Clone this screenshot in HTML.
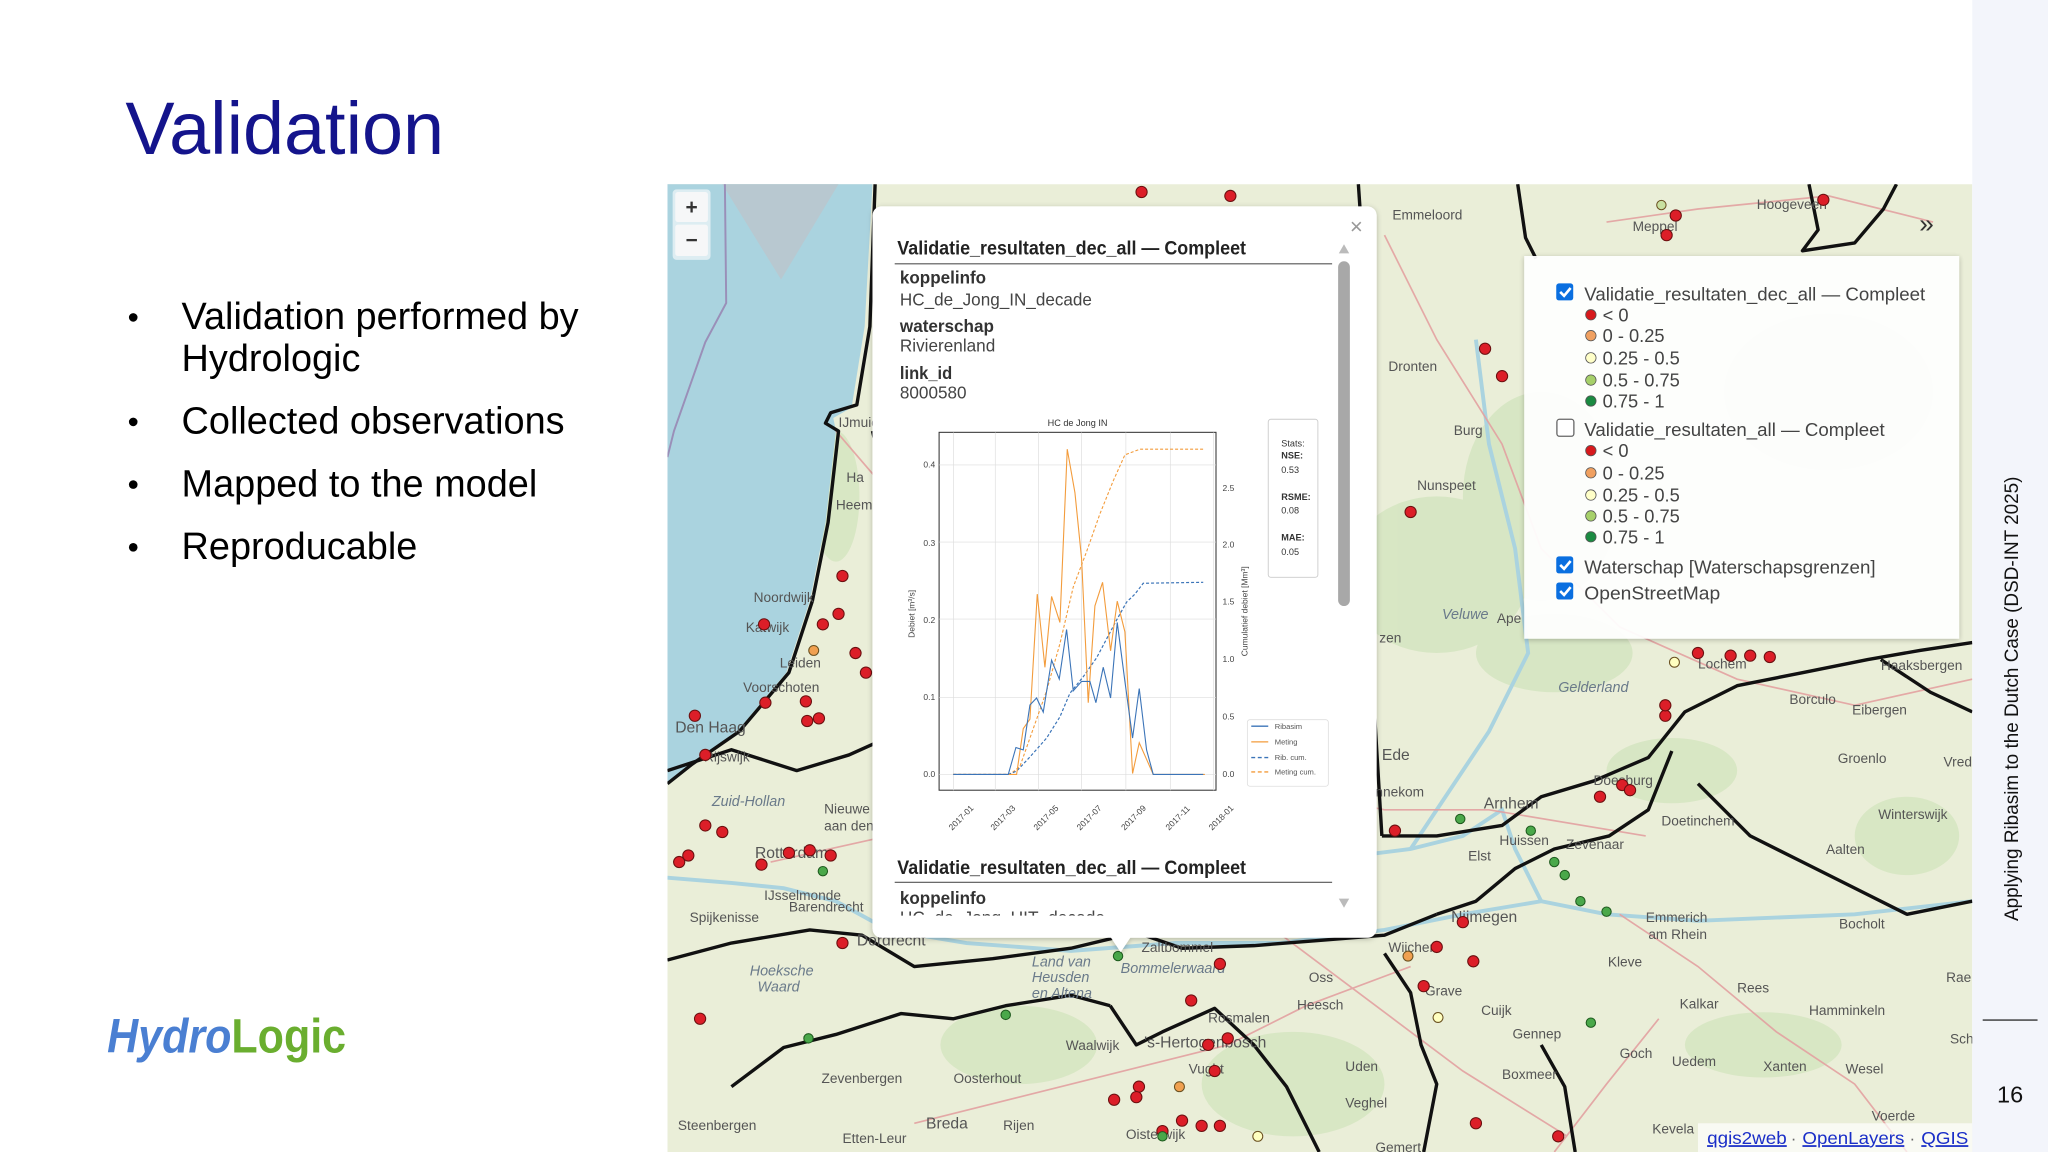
<!DOCTYPE html>
<html><head><meta charset="utf-8"><style>
html,body{margin:0;padding:0;background:#fff;}
svg{display:block;}
text{font-family:"Liberation Sans",Arial,sans-serif;}
</style></head><body>
<svg width="2048" height="1152" viewBox="0 0 1568 882" xmlns="http://www.w3.org/2000/svg">
<defs>
<clipPath id="mapclip"><rect x="511" y="141" width="999" height="741"/></clipPath>
<clipPath id="popclip"><rect x="680" y="180" width="340" height="521"/></clipPath>
<filter id="sh" x="-10%" y="-10%" width="120%" height="120%"><feDropShadow dx="0" dy="1" stdDeviation="2" flood-opacity="0.25"/></filter>
</defs>
<rect width="1568" height="882" fill="#fff"/>
<rect x="1510" y="0" width="58" height="882" fill="#f3f5fb"/>
<text transform="translate(1545,535) rotate(-90)" text-anchor="middle" font-size="14.5" fill="#111">Applying Ribasim to the Dutch Case (DSD-INT 2025)</text>
<line x1="1518" y1="781" x2="1560" y2="781" stroke="#333" stroke-width="1"/>
<text x="1539" y="844" text-anchor="middle" font-size="18" fill="#111">16</text>

<text x="96" y="118" font-size="57" fill="#14148c" textLength="244" lengthAdjust="spacingAndGlyphs">Validation</text>
<g font-size="29" fill="#000">
<circle cx="102" cy="243" r="3.3"/><text x="139" y="252">Validation performed by</text>
<text x="139" y="284">Hydrologic</text>
<circle cx="102" cy="323" r="3.3"/><text x="139" y="332">Collected observations</text>
<circle cx="102" cy="371" r="3.3"/><text x="139" y="380">Mapped to the model</text>
<circle cx="102" cy="419" r="3.3"/><text x="139" y="428">Reproducable</text>
</g>
<text x="82" y="806" font-size="37" font-weight="bold" textLength="183" lengthAdjust="spacingAndGlyphs"><tspan fill="#4a7fd2" font-style="italic">Hydro</tspan><tspan fill="#6aae2f">Logic</tspan></text>

<g clip-path="url(#mapclip)">
<rect x="511" y="141" width="999" height="741" fill="#eaeed8"/>
<g fill="#d6e6c2" opacity="0.9">
<ellipse cx="1100" cy="440" rx="70" ry="60"/><ellipse cx="1180" cy="380" rx="60" ry="80"/>
<ellipse cx="1400" cy="300" rx="80" ry="60"/><ellipse cx="1280" cy="590" rx="50" ry="25"/>
<ellipse cx="780" cy="800" rx="60" ry="30"/><ellipse cx="990" cy="830" rx="70" ry="40"/>
<ellipse cx="1350" cy="800" rx="60" ry="25"/><ellipse cx="1190" cy="500" rx="60" ry="30"/>
<ellipse cx="640" cy="380" rx="18" ry="50"/><ellipse cx="1460" cy="640" rx="40" ry="30"/>
</g>
<path d="M511,141 L668,141 L662,250 L652,312 L638,320 L640,330 L632,400 L620,460 L602,515 L566,558 L530,585 L511,600 Z" fill="#aad3df"/>
<path d="M553,141 L642,141 L598,214 Z" fill="#b8c8d0"/>
<path d="M555,141 L556,232 L540,262 L516,330 L511,350" fill="none" stroke="#9a8fb8" stroke-width="1.5"/>
<g fill="none" stroke="#aad3df" stroke-width="3">
<path d="M1510,690 L1420,700 L1300,705 L1230,700 L1180,690 L1120,700 L1060,712 L980,722 L900,722 L820,728 L740,722 L680,712 L640,690 L600,680 L560,676 L511,672"/>
<path d="M1180,690 L1160,650 L1150,620 L1120,640 L1080,650 L1000,660"/>
<path d="M1080,650 L1140,560 L1170,500 L1160,420 L1140,340 L1130,260"/>
</g>
<g fill="none" stroke="#e3a1a1" stroke-width="1.3" opacity="0.9">
<path d="M640,330 L700,400 L760,470 L820,560 L900,640 L960,700 L1040,760 L1120,820 L1200,870"/>
<path d="M1060,180 L1100,260 L1150,340 L1180,420 L1240,480 L1330,520 L1420,540 L1510,520"/>
<path d="M590,660 L680,640 L760,620 L860,600 L960,600 L1060,620 L1140,620 L1260,640"/>
<path d="M1240,700 L1300,740 L1360,790 L1420,830 L1460,882"/>
<path d="M700,860 L780,840 L860,820 L940,800 L1000,770 L1080,740"/>
<path d="M1230,170 L1300,160 L1400,150 L1480,170"/>
<path d="M1270,780 L1230,830 L1190,882"/>
</g>
<g fill="none" stroke="#111" stroke-width="2.6" stroke-linejoin="round">
<path d="M670,141 L666,250 L656,310 L636,316 L632,324 L642,330 L634,400 L622,460 L604,515 L566,560 L530,585 L511,600"/>
<path d="M1040,141 L1046,230 L1052,330 L1048,440 L1052,540 L1058,640"/>
<path d="M1058,640 L1100,640 L1150,632 L1180,610 L1220,598 L1262,580 L1290,545 L1330,525 L1380,515 L1430,505 L1470,498 L1510,492"/>
<path d="M1100,700 L1130,690 L1160,665 L1190,650 L1232,640 L1262,620 L1280,575"/>
<path d="M1300,600 L1340,640 L1380,660 L1420,680 L1460,700 L1510,690"/>
<path d="M1440,505 L1478,530 L1510,545"/>
<path d="M511,590 L560,574 L610,590 L650,578 L690,560 L700,520 L680,470 L672,430 L680,380 L668,330"/>
<path d="M511,735 L560,722 L620,712 L660,716 L700,740 L760,734 L820,726 L870,714 L905,726 L960,724 L1010,720 L1060,716 L1100,700"/>
<path d="M560,832 L600,802 L640,792 L690,776 L730,780 L770,770 L820,762 L850,770"/>
<path d="M850,770 L870,800 L890,790 L930,772 L960,800 L985,832 L1000,862 L1010,882"/>
<path d="M1180,800 L1198,832 L1206,882"/>
<path d="M1385,141 L1392,176 L1380,192 L1420,186 L1442,160 L1452,141"/>
<path d="M1162,141 L1168,182 L1176,198"/>
<path d="M1060,730 L1080,760 L1088,800 L1100,830 L1090,882"/>
</g>
<g font-size="10.5" fill="#555">
<text x="1066" y="168">Emmeloord</text><text x="1063" y="284">Dronten</text><text x="1085" y="375">Nunspeet</text>
<text x="1250" y="177">Meppel</text><text x="1345" y="160">Hoogeveen</text><text x="642" y="327">IJmuiden</text>
<text x="648" y="369">Ha</text><text x="640" y="390">Heem</text><text x="577" y="461">Noordwijk</text><text x="571" y="484">Katwijk</text>
<text x="597" y="511">Leiden</text><text x="569" y="530">Voorschoten</text><text x="517" y="561" font-size="12">Den Haag</text>
<text x="539" y="583">Rijswijk</text><text x="631" y="623">Nieuwe</text><text x="631" y="636">aan den</text>
<text x="578" y="657" font-size="12">Rotterdam</text><text x="585" y="689">IJsselmonde</text><text x="604" y="698">Barendrecht</text>
<text x="528" y="706">Spijkenisse</text><text x="656" y="724" font-size="12">Dordrecht</text>
<text x="874" y="729">Zaltbommel</text><text x="1002" y="752">Oss</text><text x="993" y="773">Heesch</text>
<text x="925" y="783">Rosmalen</text><text x="816" y="804">Waalwijk</text><text x="876" y="802" font-size="12">'s-Hertogenbosch</text>
<text x="910" y="822">Vught</text><text x="629" y="829">Zevenbergen</text><text x="730" y="829">Oosterhout</text>
<text x="709" y="864" font-size="12">Breda</text><text x="768" y="865">Rijen</text><text x="645" y="875">Etten-Leur</text>
<text x="519" y="865">Steenbergen</text><text x="862" y="872">Oisterwijk</text><text x="1030" y="820">Uden</text>
<text x="1030" y="848">Veghel</text><text x="1063" y="729">Wijchen</text><text x="1111" y="706" font-size="12">Nijmegen</text>
<text x="1124" y="659">Elst</text><text x="1136" y="619" font-size="12">Arnhem</text><text x="1148" y="647">Huissen</text>
<text x="1199" y="650">Zevenaar</text><text x="1058" y="582" font-size="12">Ede</text><text x="1053" y="610">nnekom</text>
<text x="1146" y="477">Ape</text><text x="1300" y="512">Lochem</text><text x="1370" y="539">Borculo</text>
<text x="1418" y="547">Eibergen</text><text x="1407" y="584">Groenlo</text><text x="1220" y="601">Doesburg</text>
<text x="1272" y="632">Doetinchem</text><text x="1398" y="654">Aalten</text><text x="1438" y="627">Winterswijk</text>
<text x="1260" y="706">Emmerich</text><text x="1262" y="719">am Rhein</text><text x="1408" y="711">Bocholt</text>
<text x="1231" y="740">Kleve</text><text x="1330" y="760">Rees</text><text x="1286" y="772">Kalkar</text>
<text x="1385" y="777">Hamminkeln</text><text x="1240" y="810">Goch</text><text x="1280" y="816">Uedem</text>
<text x="1350" y="820">Xanten</text><text x="1413" y="822">Wesel</text><text x="1433" y="858">Voerde</text>
<text x="1265" y="868">Kevela</text><text x="1158" y="795">Gennep</text><text x="1134" y="777">Cuijk</text>
<text x="1150" y="826">Boxmeer</text><text x="1091" y="762">Grave</text><text x="1053" y="882">Gemert</text>
<text x="1440" y="513">Haaksbergen</text><text x="1488" y="587">Vred</text><text x="1490" y="752">Rae</text><text x="1493" y="799">Sch</text>
<text x="1113" y="333">Burg</text><text x="1056" y="492">zen</text>
</g>
<g font-size="11" fill="#6a7a8a" font-style="italic">
<text x="1104" y="474">Veluwe</text><text x="1193" y="530">Gelderland</text><text x="545" y="617">Zuid-Hollan</text>
<text x="790" y="740">Land van</text><text x="790" y="752">Heusden</text><text x="790" y="764">en Altena</text>
<text x="858" y="745">Bommelerwaard</text><text x="574" y="747">Hoeksche</text><text x="580" y="759">Waard</text>
</g>
<g fill="#dc1e28" stroke="#6a1010" stroke-width="0.8">
<circle cx="874" cy="147" r="4.3"/><circle cx="942" cy="150" r="4.3"/><circle cx="1137" cy="267" r="4.3"/><circle cx="1150" cy="288" r="4.3"/>
<circle cx="1080" cy="392" r="4.3"/><circle cx="645" cy="441" r="4.3"/><circle cx="585" cy="478" r="4.3"/><circle cx="642" cy="470" r="4.3"/>
<circle cx="630" cy="478" r="4.3"/><circle cx="655" cy="500" r="4.3"/><circle cx="663" cy="515" r="4.3"/><circle cx="532" cy="548" r="4.3"/>
<circle cx="540" cy="578" r="4.3"/><circle cx="586" cy="538" r="4.3"/><circle cx="618" cy="552" r="4.3"/><circle cx="627" cy="550" r="4.3"/>
<circle cx="617" cy="537" r="4.3"/><circle cx="540" cy="632" r="4.3"/><circle cx="553" cy="637" r="4.3"/><circle cx="520" cy="660" r="4.3"/>
<circle cx="527" cy="655" r="4.3"/><circle cx="583" cy="662" r="4.3"/><circle cx="604" cy="653" r="4.3"/><circle cx="620" cy="651" r="4.3"/>
<circle cx="636" cy="655" r="4.3"/><circle cx="645" cy="722" r="4.3"/><circle cx="536" cy="780" r="4.3"/><circle cx="1300" cy="500" r="4.3"/>
<circle cx="1325" cy="502" r="4.3"/><circle cx="1340" cy="502" r="4.3"/><circle cx="1355" cy="503" r="4.3"/><circle cx="1275" cy="548" r="4.3"/>
<circle cx="1275" cy="540" r="4.3"/><circle cx="1242" cy="601" r="4.3"/><circle cx="1248" cy="605" r="4.3"/><circle cx="1225" cy="610" r="4.3"/>
<circle cx="1068" cy="636" r="4.3"/><circle cx="1120" cy="706" r="4.3"/><circle cx="1128" cy="736" r="4.3"/><circle cx="1090" cy="755" r="4.3"/>
<circle cx="1100" cy="725" r="4.3"/><circle cx="934" cy="738" r="4.3"/><circle cx="912" cy="766" r="4.3"/><circle cx="940" cy="795" r="4.3"/>
<circle cx="925" cy="800" r="4.3"/><circle cx="930" cy="820" r="4.3"/><circle cx="872" cy="832" r="4.3"/><circle cx="870" cy="840" r="4.3"/>
<circle cx="853" cy="842" r="4.3"/><circle cx="905" cy="858" r="4.3"/><circle cx="890" cy="866" r="4.3"/><circle cx="920" cy="862" r="4.3"/>
<circle cx="934" cy="862" r="4.3"/><circle cx="1193" cy="870" r="4.3"/><circle cx="1130" cy="860" r="4.3"/><circle cx="1283" cy="165" r="4.3"/>
<circle cx="1276" cy="180" r="4.3"/><circle cx="1396" cy="153" r="4.3"/>
</g>
<g fill="#4aa84a" stroke="#1e5a1e" stroke-width="0.8">
<circle cx="1118" cy="627" r="3.6"/><circle cx="1172" cy="636" r="3.6"/><circle cx="1190" cy="660" r="3.6"/><circle cx="1198" cy="670" r="3.6"/>
<circle cx="1230" cy="698" r="3.6"/><circle cx="1218" cy="783" r="3.6"/><circle cx="1210" cy="690" r="3.6"/><circle cx="770" cy="777" r="3.6"/>
<circle cx="619" cy="795" r="3.6"/><circle cx="630" cy="667" r="3.6"/><circle cx="856" cy="732" r="3.6"/><circle cx="890" cy="870" r="3.6"/>
</g>
<g stroke="#6a5020" stroke-width="0.8">
<circle cx="623" cy="498" r="3.8" fill="#f0a050"/><circle cx="1078" cy="732" r="3.8" fill="#f0a050"/><circle cx="903" cy="832" r="3.8" fill="#f0a050"/>
<circle cx="1101" cy="779" r="3.8" fill="#ffffc0"/><circle cx="1282" cy="507" r="3.8" fill="#ffffc0"/><circle cx="963" cy="870" r="3.8" fill="#ffffc0"/>
<circle cx="1272" cy="157" r="3.6" fill="#c8e0a0"/>
</g>
<rect x="1300" y="860" width="210" height="22" fill="#fff" opacity="0.7"/>
<g font-size="13.5" fill="#1a2ec8" text-decoration="underline">
<text x="1307" y="876" textLength="61" lengthAdjust="spacingAndGlyphs">qgis2web</text>
<text x="1380" y="876" textLength="78" lengthAdjust="spacingAndGlyphs">OpenLayers</text>
<text x="1471" y="876" textLength="36" lengthAdjust="spacingAndGlyphs">QGIS</text>
</g>
<text x="1371" y="876" font-size="13" fill="#666">·</text><text x="1462" y="876" font-size="13" fill="#666">·</text>
</g>

<rect x="515" y="145" width="29" height="54" rx="3" fill="#fff" opacity="0.6"/>
<rect x="517" y="147" width="25" height="23" rx="2" fill="#f6f7f8"/>
<rect x="517" y="172" width="25" height="24" rx="2" fill="#f6f7f8"/>
<text x="529.5" y="164" text-anchor="middle" font-size="16" font-weight="bold" fill="#333">+</text>
<text x="529.5" y="189" text-anchor="middle" font-size="16" font-weight="bold" fill="#333">−</text>

<rect x="1167" y="196" width="333" height="293" fill="#fff" opacity="0.94" filter="url(#sh)"/>
<text x="1475" y="178" text-anchor="middle" font-size="20" fill="#333">»</text>
<g font-size="14" fill="#444">
<rect x="1191.5" y="217" width="13" height="13" rx="2" fill="#0a6fe0"/><path d="M1194.5,223.5 l3,3 l5,-6" fill="none" stroke="#fff" stroke-width="2"/>
<text x="1213" y="230" textLength="261" lengthAdjust="spacingAndGlyphs">Validatie_resultaten_dec_all — Compleet</text>
<circle cx="1218" cy="241" r="4" fill="#d7191c" stroke="#555" stroke-width="0.6"/><text x="1227" y="246">&lt; 0</text>
<circle cx="1218" cy="257" r="4" fill="#f0a060" stroke="#555" stroke-width="0.6"/><text x="1227" y="262">0 - 0.25</text>
<circle cx="1218" cy="274" r="4" fill="#ffffc8" stroke="#555" stroke-width="0.6"/><text x="1227" y="279">0.25 - 0.5</text>
<circle cx="1218" cy="291" r="4" fill="#a6d06a" stroke="#555" stroke-width="0.6"/><text x="1227" y="296">0.5 - 0.75</text>
<circle cx="1218" cy="307" r="4" fill="#1a8a41" stroke="#555" stroke-width="0.6"/><text x="1227" y="312">0.75 - 1</text>
<rect x="1192" y="321" width="13" height="13" rx="2" fill="#fff" stroke="#666" stroke-width="1"/>
<text x="1213" y="334" textLength="230" lengthAdjust="spacingAndGlyphs">Validatie_resultaten_all — Compleet</text>
<circle cx="1218" cy="345" r="4" fill="#d7191c" stroke="#555" stroke-width="0.6"/><text x="1227" y="350">&lt; 0</text>
<circle cx="1218" cy="362" r="4" fill="#f0a060" stroke="#555" stroke-width="0.6"/><text x="1227" y="367">0 - 0.25</text>
<circle cx="1218" cy="379" r="4" fill="#ffffc8" stroke="#555" stroke-width="0.6"/><text x="1227" y="384">0.25 - 0.5</text>
<circle cx="1218" cy="395" r="4" fill="#a6d06a" stroke="#555" stroke-width="0.6"/><text x="1227" y="400">0.5 - 0.75</text>
<circle cx="1218" cy="411" r="4" fill="#1a8a41" stroke="#555" stroke-width="0.6"/><text x="1227" y="416">0.75 - 1</text>
<rect x="1191.5" y="426" width="13" height="13" rx="2" fill="#0a6fe0"/><path d="M1194.5,432.5 l3,3 l5,-6" fill="none" stroke="#fff" stroke-width="2"/>
<text x="1213" y="439" textLength="223" lengthAdjust="spacingAndGlyphs">Waterschap [Waterschapsgrenzen]</text>
<rect x="1191.5" y="446" width="13" height="13" rx="2" fill="#0a6fe0"/><path d="M1194.5,452.5 l3,3 l5,-6" fill="none" stroke="#fff" stroke-width="2"/>
<text x="1213" y="459" textLength="104" lengthAdjust="spacingAndGlyphs">OpenStreetMap</text>
</g>

<g filter="url(#sh)">
<rect x="668" y="158" width="386" height="560" rx="7" fill="#fff"/>
<path d="M850,717 L858,729 L866,717 Z" fill="#fff"/>
</g>
<text x="1038.5" y="179" text-anchor="middle" font-size="17" fill="#999">×</text>
<path d="M1025,194 L1029,187 L1033,194 Z" fill="#bbb"/>
<rect x="1024.5" y="200" width="9" height="264" rx="4.5" fill="#a8a8a8"/>
<path d="M1025,688 L1029,695 L1033,688 Z" fill="#bbb"/>
<g clip-path="url(#popclip)">
<text x="687" y="195" font-size="14.5" font-weight="bold" fill="#222" textLength="267" lengthAdjust="spacingAndGlyphs">Validatie_resultaten_dec_all — Compleet</text>
<line x1="685" y1="202" x2="1020" y2="202" stroke="#555" stroke-width="0.9"/>
<g font-size="13.5" fill="#333">
<text x="689" y="217" font-weight="bold" textLength="66" lengthAdjust="spacingAndGlyphs">koppelinfo</text>
<text x="689" y="234" fill="#444" textLength="147" lengthAdjust="spacingAndGlyphs">HC_de_Jong_IN_decade</text>
<text x="689" y="254" font-weight="bold" textLength="72" lengthAdjust="spacingAndGlyphs">waterschap</text>
<text x="689" y="269" fill="#444" textLength="73" lengthAdjust="spacingAndGlyphs">Rivierenland</text>
<text x="689" y="290" font-weight="bold" textLength="40" lengthAdjust="spacingAndGlyphs">link_id</text>
<text x="689" y="305" fill="#444" textLength="51" lengthAdjust="spacingAndGlyphs">8000580</text>
</g>
<text x="825" y="326" text-anchor="middle" font-size="7" fill="#333">HC de Jong IN</text>
<rect x="719" y="331" width="212" height="274" fill="#fff" stroke="#333" stroke-width="0.8"/>
<g stroke="#ddd" stroke-width="0.5">
<line x1="730" y1="331" x2="730" y2="605"/><line x1="762" y1="331" x2="762" y2="605"/><line x1="795" y1="331" x2="795" y2="605"/>
<line x1="828" y1="331" x2="828" y2="605"/><line x1="862" y1="331" x2="862" y2="605"/><line x1="896" y1="331" x2="896" y2="605"/><line x1="929" y1="331" x2="929" y2="605"/>
<line x1="719" y1="593" x2="931" y2="593"/><line x1="719" y1="534" x2="931" y2="534"/><line x1="719" y1="474" x2="931" y2="474"/>
<line x1="719" y1="415" x2="931" y2="415"/><line x1="719" y1="356" x2="931" y2="356"/>
</g>
<g transform="translate(658.4,153.1) scale(0.25517,0.36140)" fill="none">
<path vector-effect="non-scaling-stroke" stroke="#f39c3c" stroke-width="1.1" stroke-dasharray="3,2" d="M280,1217 L450,1217 L480,1200 L520,1120 L560,1040 L600,940 L640,820 L680,745 L720,665 L760,595 L795,540 L840,528 L1035,528"/>
<path vector-effect="non-scaling-stroke" stroke="#3b74b8" stroke-width="1.2" stroke-dasharray="3,2" d="M280,1217 L445,1217 L470,1210 L510,1180 L560,1140 L600,1095 L630,1045 L670,1010 L710,970 L770,890 L800,852 L825,835 L850,812 L1030,810"/>
<path vector-effect="non-scaling-stroke" stroke="#f39c3c" stroke-width="1.1" d="M280,1217 L470,1217 L490,1120 L510,1100 L532,835 L555,990 L575,840 L600,895 L622,528 L645,620 L665,760 L685,1065 L705,860 L728,810 L752,955 L772,850 L795,915 L818,1215 L838,1150 L860,1185 L880,1217 L1035,1217"/>
<path vector-effect="non-scaling-stroke" stroke="#3b74b8" stroke-width="1.1" d="M280,1217 L445,1217 L468,1160 L490,1165 L510,1070 L530,1055 L550,1085 L575,975 L598,1015 L620,910 L640,1040 L665,1020 L690,1020 L708,1065 L730,990 L752,1055 L772,895 L795,1020 L818,1140 L838,1035 L860,1165 L880,1217 L1030,1217"/>
</g>
<g font-size="6.5" fill="#444">
<text x="716" y="595" text-anchor="end">0.0</text><text x="716" y="536" text-anchor="end">0.1</text><text x="716" y="477" text-anchor="end">0.2</text>
<text x="716" y="418" text-anchor="end">0.3</text><text x="716" y="358" text-anchor="end">0.4</text>
<text x="936" y="595">0.0</text><text x="936" y="551">0.5</text><text x="936" y="507">1.0</text><text x="936" y="463">1.5</text><text x="936" y="419">2.0</text><text x="936" y="376">2.5</text>
<text transform="translate(729,636) rotate(-45)">2017-01</text><text transform="translate(761,636) rotate(-45)">2017-03</text>
<text transform="translate(794,636) rotate(-45)">2017-05</text><text transform="translate(827,636) rotate(-45)">2017-07</text>
<text transform="translate(861,636) rotate(-45)">2017-09</text><text transform="translate(895,636) rotate(-45)">2017-11</text>
<text transform="translate(928,636) rotate(-45)">2018-01</text>
<text transform="translate(700,470) rotate(-90)" text-anchor="middle">Debiet [m³/s]</text>
<text transform="translate(955,468) rotate(-90)" text-anchor="middle">Cumulatief debiet [Mm³]</text>
</g>
<rect x="971" y="321" width="38" height="121" rx="2" fill="#fff" stroke="#ccc" stroke-width="0.7"/>
<g font-size="7" fill="#333">
<text x="981" y="342">Stats:</text><text x="981" y="351" font-weight="bold">NSE:</text><text x="981" y="362">0.53</text>
<text x="981" y="383" font-weight="bold">RSME:</text><text x="981" y="393">0.08</text>
<text x="981" y="414" font-weight="bold">MAE:</text><text x="981" y="425">0.05</text>
</g>
<rect x="955" y="551" width="62" height="51" rx="2" fill="#fff" stroke="#ddd" stroke-width="0.6"/>
<g font-size="5.8" fill="#555">
<line x1="958" y1="556" x2="971" y2="556" stroke="#3b74b8" stroke-width="1"/><text x="976" y="558">Ribasim</text>
<line x1="958" y1="568" x2="971" y2="568" stroke="#f39c3c" stroke-width="1"/><text x="976" y="570">Meting</text>
<line x1="958" y1="580" x2="971" y2="580" stroke="#3b74b8" stroke-width="1.1" stroke-dasharray="3,2"/><text x="976" y="582">Rib. cum.</text>
<line x1="958" y1="591" x2="971" y2="591" stroke="#f39c3c" stroke-width="1" stroke-dasharray="3,2"/><text x="976" y="593">Meting cum.</text>
</g>
<text x="687" y="669" font-size="14.5" font-weight="bold" fill="#222" textLength="267" lengthAdjust="spacingAndGlyphs">Validatie_resultaten_dec_all — Compleet</text>
<line x1="685" y1="675.5" x2="1020" y2="675.5" stroke="#555" stroke-width="0.9"/>
<text x="689" y="692" font-size="13.5" font-weight="bold" fill="#333" textLength="66" lengthAdjust="spacingAndGlyphs">koppelinfo</text>
<text x="689" y="707" font-size="13.5" fill="#444" textLength="157" lengthAdjust="spacingAndGlyphs">HC_de_Jong_UIT_decade</text>
</g>
</svg>
</body></html>
